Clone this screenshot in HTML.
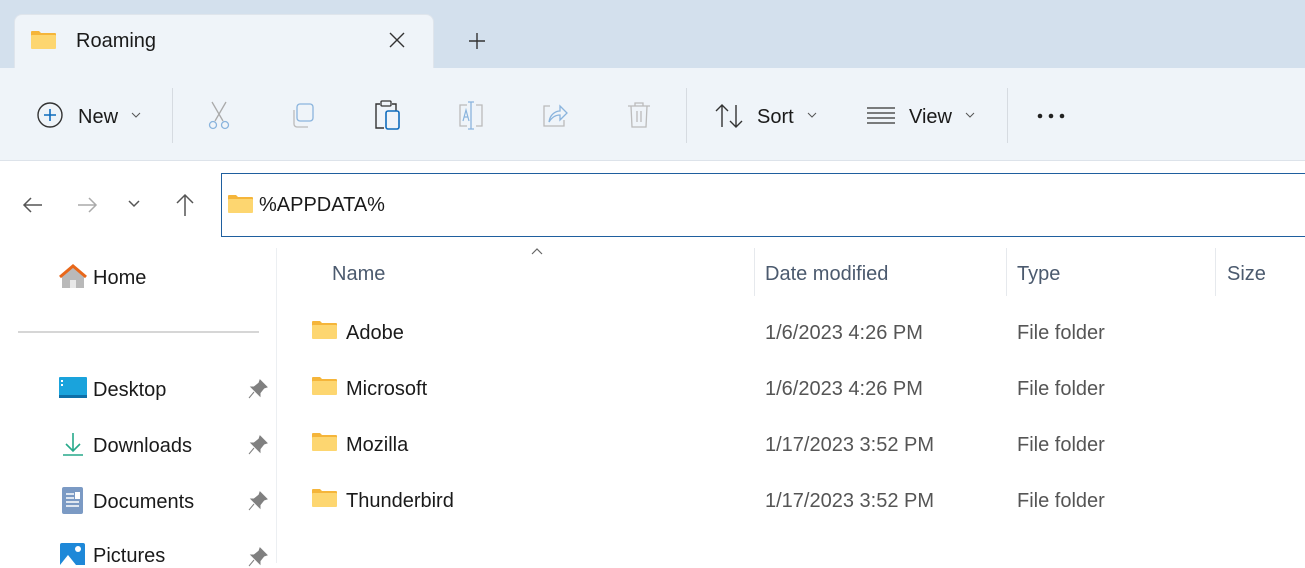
<!DOCTYPE html>
<html><head><style>
*{margin:0;padding:0;box-sizing:border-box}
body{width:1305px;height:563px;overflow:hidden;background:#fff;font-family:"Liberation Sans",sans-serif;position:relative;color:#1a1a1a}
.a{position:absolute}
.t{font-size:20px;white-space:nowrap}
.folder{position:absolute;width:25px;height:19px}
</style></head><body>
<div class="a" style="left:0;top:0;width:1305px;height:68px;background:#d3e0ed"></div>
<div class="a" style="left:14px;top:14px;width:420px;height:56px;background:#eff4f9;border-radius:8px 8px 0 0;border:1px solid #dfe5ec;border-bottom:none"></div>
<svg class="folder" style="left:31px;top:30px" viewBox="0 0 25 19"><path d="M0 2a1 1 0 0 1 1-1h7l2 2h14a1 1 0 0 1 1 1v14H0z" fill="#f5b53a"/><rect x="0" y="5" width="25" height="14" rx="1" fill="#fdd670"/></svg>
<div class="a t" style="left:76px;top:30px">Roaming</div>
<svg class="a" style="left:388px;top:31px" width="18" height="18"><path d="M2 2L16 16M16 2L2 16" stroke="#333" stroke-width="1.4"/></svg>
<svg class="a" style="left:468px;top:32px" width="18" height="18"><path d="M9 1V17M1 9H17" stroke="#333" stroke-width="1.4"/></svg>
<div class="a" style="left:0;top:68px;width:1305px;height:93px;background:#eff4f9;border-bottom:1px solid #dde3ea"></div>
<svg class="a" style="left:36px;top:101px" width="28" height="28"><circle cx="14" cy="14" r="12" fill="none" stroke="#333" stroke-width="1.4"/><path d="M14 8V20M8 14H20" stroke="#0f6cbd" stroke-width="1.6"/></svg>
<div class="a t" style="left:78px;top:106px">New</div>
<svg class="a" style="left:131px;top:111px" width="10" height="8"><path d="M1 2L5 6L9 2" stroke="#555" fill="none"/></svg>
<div class="a" style="left:172px;top:88px;width:1px;height:55px;background:#d6dbe1"></div>
<svg class="a" style="left:205px;top:100px" width="28" height="32"><path d="M7 2L18 21M21 2L10 21" stroke="#aaa" stroke-width="1.3"/><circle cx="8" cy="25" r="3.5" fill="none" stroke="#8ab4dd" stroke-width="1.3"/><circle cx="20" cy="25" r="3.5" fill="none" stroke="#8ab4dd" stroke-width="1.3"/></svg>
<svg class="a" style="left:290px;top:102px" width="28" height="28"><rect x="7" y="2" width="16" height="17" rx="3" fill="none" stroke="#8ab4dd" stroke-width="1.3"/><path d="M4 8V22a3 3 0 0 0 3 3H18" fill="none" stroke="#bbb" stroke-width="1.3"/></svg>
<svg class="a" style="left:372px;top:100px" width="30" height="32"><path d="M8 4H4V28H12" fill="none" stroke="#333" stroke-width="1.4"/><rect x="9" y="1" width="10" height="5" rx="1" fill="none" stroke="#333" stroke-width="1.3"/><path d="M20 4H24V11" fill="none" stroke="#333" stroke-width="1.4"/><rect x="14" y="11" width="13" height="18" rx="2" fill="none" stroke="#0f6cbd" stroke-width="1.6"/></svg>
<svg class="a" style="left:455px;top:100px" width="32" height="32"><path d="M12 5H5V26H12M21 5H27V26H21" fill="none" stroke="#bbb" stroke-width="1.3"/><path d="M16 2V29M13 2H19M13 29H19" stroke="#8ab4dd" stroke-width="1.3"/><path d="M8 21L11 10L14 21M9 17H13" stroke="#8ab4dd" fill="none" stroke-width="1.2"/></svg>
<svg class="a" style="left:540px;top:100px" width="30" height="30"><path d="M10 6H4V26H24V20" fill="none" stroke="#bbb" stroke-width="1.3"/><path d="M9 22C10 14 16 11 20 11V6L27 13L20 20V15C16 15 12 17 9 22Z" fill="none" stroke="#8ab4dd" stroke-width="1.3"/></svg>
<svg class="a" style="left:625px;top:100px" width="28" height="30"><path d="M3 6H25M10 6V3H18V6M6 6L7 27H21L22 6M12 11V22M16 11V22" fill="none" stroke="#bbb" stroke-width="1.3"/></svg>
<div class="a" style="left:686px;top:88px;width:1px;height:55px;background:#d6dbe1"></div>
<svg class="a" style="left:714px;top:103px" width="30" height="26"><path d="M8 24V2M2 8L8 2L14 8M22 2V24M16 18L22 24L28 18" fill="none" stroke="#333" stroke-width="1.4"/></svg>
<div class="a t" style="left:757px;top:106px">Sort</div>
<svg class="a" style="left:807px;top:111px" width="10" height="8"><path d="M1 2L5 6L9 2" stroke="#555" fill="none"/></svg>
<svg class="a" style="left:866px;top:106px" width="30" height="20"><path d="M1 2H29M1 7H29M1 12H29M1 17H29" stroke="#333" stroke-width="1.3"/></svg>
<div class="a t" style="left:909px;top:106px">View</div>
<svg class="a" style="left:965px;top:111px" width="10" height="8"><path d="M1 2L5 6L9 2" stroke="#555" fill="none"/></svg>
<div class="a" style="left:1007px;top:88px;width:1px;height:55px;background:#d6dbe1"></div>
<svg class="a" style="left:1036px;top:112px" width="32" height="8"><circle cx="4" cy="4" r="2.3" fill="#222"/><circle cx="15" cy="4" r="2.3" fill="#222"/><circle cx="26" cy="4" r="2.3" fill="#222"/></svg>
<svg class="a" style="left:22px;top:195px" width="22" height="20"><path d="M20 10H2M9 3L2 10L9 17" fill="none" stroke="#555" stroke-width="1.5"/></svg>
<svg class="a" style="left:76px;top:195px" width="22" height="20"><path d="M2 10H20M13 3L20 10L13 17" fill="none" stroke="#aaa" stroke-width="1.5"/></svg>
<svg class="a" style="left:127px;top:199px" width="14" height="10"><path d="M2 2L7 7L12 2" fill="none" stroke="#555" stroke-width="1.5"/></svg>
<svg class="a" style="left:174px;top:193px" width="22" height="24"><path d="M11 23V2M3 10L11 2L19 10" fill="none" stroke="#555" stroke-width="1.5"/></svg>
<div class="a" style="left:221px;top:173px;width:1090px;height:64px;border:1.5px solid #1f5f9e;background:#fff"></div>
<svg class="folder" style="left:228px;top:194px" viewBox="0 0 25 19"><path d="M0 2a1 1 0 0 1 1-1h7l2 2h14a1 1 0 0 1 1 1v14H0z" fill="#f5b53a"/><rect x="0" y="5" width="25" height="14" rx="1" fill="#fdd670"/></svg>
<div class="a t" style="left:259px;top:194px">%APPDATA%</div>
<div class="a" style="left:276px;top:248px;width:1px;height:315px;background:#eceff2"></div>
<svg class="a" style="left:58px;top:263px" width="30" height="26"><path d="M4 13V25H26V13L15 4Z" fill="#b9b9b9"/><rect x="12" y="17" width="6" height="8" fill="#e8e8e8"/><path d="M2 14L15 3L28 14" fill="none" stroke="#e8671a" stroke-width="3"/></svg>
<div class="a t" style="left:93px;top:267px">Home</div>
<div class="a" style="left:18px;top:331px;width:241px;height:2px;background:#d6d6d6"></div>
<svg class="a" style="left:59px;top:377px" width="28" height="22"><rect x="0" y="0" width="28" height="21" rx="1" fill="#1aa3dc"/><rect x="0" y="18" width="28" height="3" fill="#0d6fa8"/><rect x="2" y="3" width="2" height="2" fill="#fff"/><rect x="2" y="7" width="2" height="2" fill="#fff"/></svg>
<div class="a t" style="left:93px;top:379px">Desktop</div>
<svg class="a" style="left:62px;top:431px" width="22" height="26"><path d="M11 2V20M4 13L11 20L18 13M1 24H21" fill="none" stroke="#26a98a" stroke-width="1.6"/></svg>
<div class="a t" style="left:93px;top:435px">Downloads</div>
<svg class="a" style="left:62px;top:487px" width="22" height="28"><rect x="0" y="0" width="21" height="27" rx="2" fill="#7b9ac4"/><path d="M4 7H12M4 11H12M4 15H17M4 19H17" stroke="#fff" stroke-width="1.5"/><rect x="13" y="5" width="5" height="7" fill="#fff"/></svg>
<div class="a t" style="left:93px;top:491px">Documents</div>
<svg class="a" style="left:60px;top:543px" width="26" height="22"><rect x="0" y="0" width="25" height="24" rx="2" fill="#1e88d8"/><circle cx="18" cy="6" r="3" fill="#fff"/><path d="M0 22L8 12L16 22Z" fill="#fff"/></svg>
<div class="a t" style="left:93px;top:545px">Pictures</div>
<svg class="a" style="left:248px;top:379px" width="20" height="20"><path d="M12 1L19 8L16 9L12 14L12 17L3 8L6 8L11 4Z M6 13L1 19" fill="#808080" stroke="#808080" stroke-width="1"/></svg>
<svg class="a" style="left:248px;top:435px" width="20" height="20"><path d="M12 1L19 8L16 9L12 14L12 17L3 8L6 8L11 4Z M6 13L1 19" fill="#808080" stroke="#808080" stroke-width="1"/></svg>
<svg class="a" style="left:248px;top:491px" width="20" height="20"><path d="M12 1L19 8L16 9L12 14L12 17L3 8L6 8L11 4Z M6 13L1 19" fill="#808080" stroke="#808080" stroke-width="1"/></svg>
<svg class="a" style="left:248px;top:547px" width="20" height="20"><path d="M12 1L19 8L16 9L12 14L12 17L3 8L6 8L11 4Z M6 13L1 19" fill="#808080" stroke="#808080" stroke-width="1"/></svg>
<svg class="a" style="left:531px;top:248px" width="12" height="8"><path d="M1 6L6 1L11 6" fill="none" stroke="#666" stroke-width="1.2"/></svg>
<div class="a t" style="left:332px;top:263px;color:#4b5a6e">Name</div>
<div class="a" style="left:754px;top:248px;width:1px;height:48px;background:#e6e9ed"></div>
<div class="a t" style="left:765px;top:263px;color:#4b5a6e">Date modified</div>
<div class="a" style="left:1006px;top:248px;width:1px;height:48px;background:#e6e9ed"></div>
<div class="a t" style="left:1017px;top:263px;color:#4b5a6e">Type</div>
<div class="a" style="left:1215px;top:248px;width:1px;height:48px;background:#e6e9ed"></div>
<div class="a t" style="left:1227px;top:263px;color:#4b5a6e">Size</div>

<svg class="folder" style="left:312px;top:320px" viewBox="0 0 25 19"><path d="M0 2a1 1 0 0 1 1-1h7l2 2h14a1 1 0 0 1 1 1v14H0z" fill="#f5b53a"/><rect x="0" y="5" width="25" height="14" rx="1" fill="#fdd670"/></svg>
<div class="a t" style="left:346px;top:322px">Adobe</div>
<div class="a t" style="left:765px;top:322px;color:#555">1/6/2023 4:26 PM</div>
<div class="a t" style="left:1017px;top:322px;color:#555">File folder</div>

<svg class="folder" style="left:312px;top:376px" viewBox="0 0 25 19"><path d="M0 2a1 1 0 0 1 1-1h7l2 2h14a1 1 0 0 1 1 1v14H0z" fill="#f5b53a"/><rect x="0" y="5" width="25" height="14" rx="1" fill="#fdd670"/></svg>
<div class="a t" style="left:346px;top:378px">Microsoft</div>
<div class="a t" style="left:765px;top:378px;color:#555">1/6/2023 4:26 PM</div>
<div class="a t" style="left:1017px;top:378px;color:#555">File folder</div>

<svg class="folder" style="left:312px;top:432px" viewBox="0 0 25 19"><path d="M0 2a1 1 0 0 1 1-1h7l2 2h14a1 1 0 0 1 1 1v14H0z" fill="#f5b53a"/><rect x="0" y="5" width="25" height="14" rx="1" fill="#fdd670"/></svg>
<div class="a t" style="left:346px;top:434px">Mozilla</div>
<div class="a t" style="left:765px;top:434px;color:#555">1/17/2023 3:52 PM</div>
<div class="a t" style="left:1017px;top:434px;color:#555">File folder</div>

<svg class="folder" style="left:312px;top:488px" viewBox="0 0 25 19"><path d="M0 2a1 1 0 0 1 1-1h7l2 2h14a1 1 0 0 1 1 1v14H0z" fill="#f5b53a"/><rect x="0" y="5" width="25" height="14" rx="1" fill="#fdd670"/></svg>
<div class="a t" style="left:346px;top:490px">Thunderbird</div>
<div class="a t" style="left:765px;top:490px;color:#555">1/17/2023 3:52 PM</div>
<div class="a t" style="left:1017px;top:490px;color:#555">File folder</div>
</body></html>
